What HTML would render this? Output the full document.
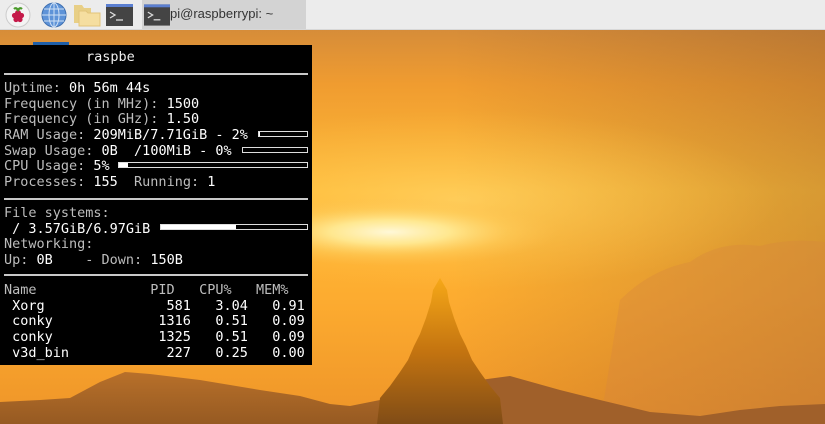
<!DOCTYPE html>
<html><head><meta charset="utf-8"><style>
html,body{margin:0;padding:0;width:825px;height:424px;overflow:hidden;background:#e89a40}
#bg{position:absolute;left:0;top:0}
#bar{position:absolute;left:0;top:0;width:825px;height:29px;background:#ececec;border-bottom:1px solid #d8d8d8}
#task{position:absolute;left:142px;top:0;width:164px;height:29px;background:#d3d3d3}
#task span{position:absolute;left:28px;top:6px;font:13px "Liberation Sans",sans-serif;color:#333}
#conky{position:absolute;left:0;top:45px;width:312px;height:320px;background:#000}
.l{position:absolute;left:4px;font:13.5px/16px "DejaVu Sans Mono","Liberation Mono",monospace;color:#bdbdbd;white-space:pre}
.l b{font-weight:normal;color:#fff}
.r{position:absolute;left:4px;width:304px;height:2px;background:#c8c8c8}
.bx{position:absolute;height:4px;border:1px solid #ddd;box-sizing:content-box}
.bx i{position:absolute;left:0;top:0;height:4px;background:#fff}
</style></head><body>
<svg id="bg" width="825" height="424" viewBox="0 0 825 424">
<defs>
<linearGradient id="sky" x1="0" y1="0" x2="0" y2="1">
<stop offset="0" stop-color="#c8843e"/><stop offset="0.2" stop-color="#f09c30"/><stop offset="0.45" stop-color="#ffbc38"/><stop offset="0.7" stop-color="#fdac30"/><stop offset="1" stop-color="#ee9428"/></linearGradient>
<linearGradient id="dark" x1="0" y1="0" x2="1" y2="0"><stop offset="0.55" stop-color="#7a4a28" stop-opacity="0"/><stop offset="1" stop-color="#7a4a28" stop-opacity="0.3"/></linearGradient>
<radialGradient id="sun" cx="0.5" cy="0.5" r="0.5"><stop offset="0" stop-color="#fff8d8"/><stop offset="0.35" stop-color="#ffec98" stop-opacity="0.9"/><stop offset="0.7" stop-color="#ffd060" stop-opacity="0.45"/><stop offset="1" stop-color="#fcc050" stop-opacity="0"/></radialGradient>
<radialGradient id="glow" cx="0.5" cy="0.5" r="0.5"><stop offset="0" stop-color="#ffd870" stop-opacity="0.6"/><stop offset="1" stop-color="#ffc850" stop-opacity="0"/></radialGradient>
<linearGradient id="pg" x1="0" y1="0" x2="0" y2="1"><stop offset="0" stop-color="#f6a818"/><stop offset="0.5" stop-color="#c47410"/><stop offset="1" stop-color="#804c16"/></linearGradient>
<linearGradient id="hl" x1="0" y1="0" x2="0" y2="1"><stop offset="0" stop-color="#b8702a"/><stop offset="1" stop-color="#965a22"/></linearGradient>
</defs>
<rect width="825" height="424" fill="url(#sky)"/>
<rect width="825" height="424" fill="url(#dark)"/>
<ellipse cx="460" cy="200" rx="320" ry="90" fill="url(#glow)"/>
<ellipse cx="390" cy="232" rx="170" ry="34" fill="url(#sun)"/>
<path d="M620 300 Q650 270 690 262 Q720 240 760 246 Q790 238 825 242 L825 424 L600 424 Z" fill="#d88840" opacity="0.35"/>
<path d="M0 402 L40 400 L70 398 L100 382 L125 372 L150 374 L200 380 L260 390 L300 396 L330 404 L350 406 L380 400 L380 424 L0 424 Z" fill="url(#hl)"/>
<path d="M480 380 L510 376 L560 390 L600 400 L650 412 L700 416 L740 410 L780 406 L825 404 L825 424 L480 424 Z" fill="#a0602a"/>
<path d="M440 278 L447 290 L449 302 L454 318 L460 334 L466 346 L472 360 L480 372 L490 386 L500 398 L503 424 L377 424 L380 398 L390 386 L400 372 L408 360 L414 346 L420 334 L426 318 L431 302 L433 290 Z" fill="url(#pg)"/>
</svg>
<div id="bar">
<svg style="position:absolute;left:5px;top:2px" width="26" height="26" viewBox="0 0 26 26"><circle cx="13" cy="13" r="12" fill="#f4f4f4" stroke="#ccc"/><g fill="#c51a4a"><circle cx="13" cy="11" r="3"/><circle cx="9.5" cy="13.5" r="2.6"/><circle cx="16.5" cy="13.5" r="2.6"/><circle cx="11" cy="17.5" r="2.6"/><circle cx="15" cy="17.5" r="2.6"/><circle cx="13" cy="14.5" r="2.5"/></g><path d="M9 7 Q11 5 13 8 Q15 5 17 7" stroke="#4a9a2a" stroke-width="2.2" fill="none"/></svg>
<svg style="position:absolute;left:41px;top:2px" width="26" height="26" viewBox="0 0 26 26"><circle cx="13" cy="13" r="12" fill="#5e93d8" stroke="#3e6fb0"/><g stroke="#cfe0f5" fill="none" stroke-width="1"><ellipse cx="13" cy="13" rx="5" ry="12"/><line x1="13" y1="1" x2="13" y2="25"/><line x1="1" y1="13" x2="25" y2="13"/><path d="M3 7 H23 M3 19 H23"/></g></svg>
<svg style="position:absolute;left:73px;top:3px" width="28" height="24" viewBox="0 0 28 24"><path d="M1 2 H9 L11 5 H18 V20 H1 Z" fill="#e8cf86"/><path d="M6 8 H13 L15 10 H27 V23 H6 Z" fill="#f5dea0" stroke="#e2c47a"/></svg>
<svg style="position:absolute;left:106px;top:4px" width="27" height="22" viewBox="0 0 27 22"><rect width="27" height="22" fill="#444"/><rect width="27" height="3" fill="#5b7fd0"/><path d="M4 8 L9 11 L4 14" stroke="#ddd" fill="none" stroke-width="1.3"/><line x1="10" y1="16" x2="17" y2="16" stroke="#ddd" stroke-width="1.3"/></svg>
</div>
<div id="task"><svg style="position:absolute;left:2px;top:4px" width="26" height="22" viewBox="0 0 27 22"><rect width="27" height="22" fill="#444"/><rect width="27" height="3" fill="#5b7fd0"/><path d="M4 8 L9 11 L4 14" stroke="#ddd" fill="none" stroke-width="1.3"/><line x1="10" y1="16" x2="17" y2="16" stroke="#ddd" stroke-width="1.3"/></svg><span>pi@raspberrypi: ~</span></div>
<div style="position:absolute;left:33px;top:42px;width:36px;height:4px;background:#1f5fa8"></div>
<div id="conky">
<div class="l" style="top:4px;left:86px;color:#eee">raspbe</div>
<div class="r" style="top:28px"></div>
<div class="l" style="top:35px">Uptime: <b>0h 56m 44s</b></div>
<div class="l" style="top:51px">Frequency (in MHz): <b>1500</b></div>
<div class="l" style="top:66px">Frequency (in GHz): <b>1.50</b></div>
<div class="l" style="top:82px">RAM Usage: <b>209MiB/7.71GiB - 2%</b></div>
<div class="bx" style="left:258px;top:86px;width:48px"><i style="width:1px"></i></div>
<div class="l" style="top:98px">Swap Usage: <b>0B  /100MiB - 0%</b></div>
<div class="bx" style="left:242px;top:102px;width:64px"></div>
<div class="l" style="top:113px">CPU Usage: <b>5%</b></div>
<div class="bx" style="left:118px;top:117px;width:188px"><i style="width:9px"></i></div>
<div class="l" style="top:129px">Processes: <b>155</b>  Running: <b>1</b></div>
<div class="r" style="top:153px"></div>
<div class="l" style="top:160px">File systems:</div>
<div class="l" style="top:176px"><b> / 3.57GiB/6.97GiB</b></div>
<div class="bx" style="left:160px;top:179px;width:146px"><i style="width:75px"></i></div>
<div class="l" style="top:191px">Networking:</div>
<div class="l" style="top:207px">Up: <b>0B</b>    - Down: <b>150B</b></div>
<div class="r" style="top:229px"></div>
<div class="l" style="top:237px">Name              PID   CPU%   MEM%</div>
<div class="l" style="top:253px"><b> Xorg               581   3.04   0.91</b></div>
<div class="l" style="top:268px"><b> conky             1316   0.51   0.09</b></div>
<div class="l" style="top:284px"><b> conky             1325   0.51   0.09</b></div>
<div class="l" style="top:300px"><b> v3d_bin            227   0.25   0.00</b></div>
</div>
</body></html>
